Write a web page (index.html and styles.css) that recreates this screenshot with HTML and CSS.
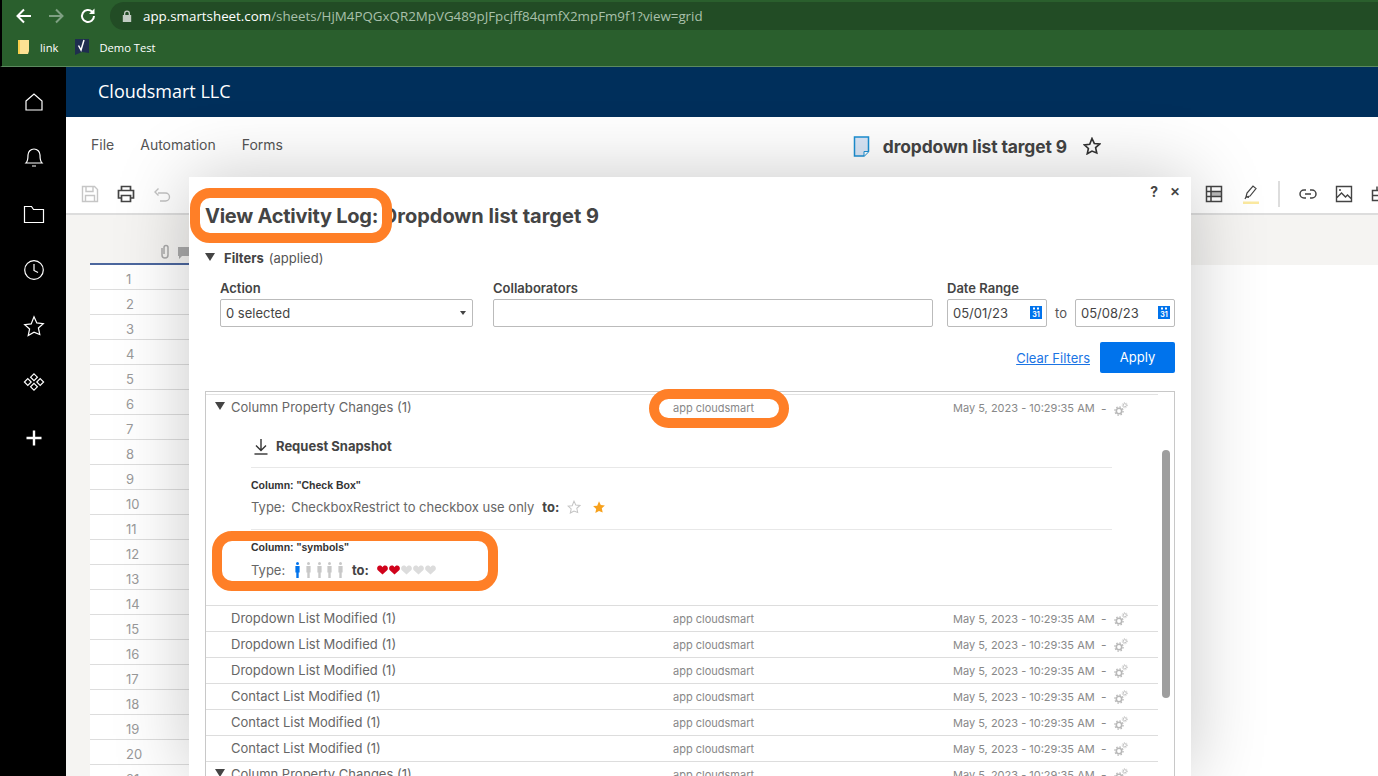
FILE: index.html
```html
<!DOCTYPE html>
<html lang="en">
<head>
<meta charset="utf-8">
<title>Smartsheet activity log</title>
<link rel="stylesheet" href="styles.css">
</head>
<body>
<svg class="defs" width="0" height="0" aria-hidden="true">
  <symbol id="gears" viewBox="0 0 14 14">
    <circle cx="5" cy="9" r="2.700" fill="none" stroke="#b8b8b8" stroke-width="1.600"/>
    <circle cx="5" cy="9" r="4.100" fill="none" stroke="#b8b8b8" stroke-width="1.300" stroke-dasharray="1.500 1.700"/>
    <circle cx="10.800" cy="3.200" r="1.600" fill="none" stroke="#c4c4c4" stroke-width="1"/>
    <circle cx="10.800" cy="3.200" r="2.600" fill="none" stroke="#c4c4c4" stroke-width="1" stroke-dasharray="1 1.200"/>
  </symbol>
  <symbol id="heart" viewBox="0 0 12 10">
    <path d="M6 10 .9 5.200C-.6 3.600.2.400 3 .2 4.400.1 5.400.9 6 1.900 6.600.9 7.600.1 9 .2c2.800.2 3.600 3.400 2.100 5Z"/>
  </symbol>
  <symbol id="person" viewBox="0 0 5 16">
    <circle cx="2.500" cy="1.600" r="1.500"/>
    <path d="M.4 4h4.200v6.500H3.700V16H1.300v-5.500H.4Z"/>
  </symbol>
  <symbol id="cal" viewBox="0 0 12 13">
    <rect width="12" height="13" fill="#0073ec"/>
    <rect x="3" y="1.500" width="2" height="2" fill="#fff"/><rect x="7" y="1.500" width="2" height="2" fill="#fff"/>
  </symbol>
</svg>

<header class="chrome">
  <div class="chrome-top">
    <svg class="nav" width="18" height="18" viewBox="0 0 18 18"><path d="M16 9H3M9 2.500 2.500 9 9 15.500" fill="none" stroke="#fff" stroke-width="2"/></svg>
    <svg class="nav" width="18" height="18" viewBox="0 0 18 18"><path d="M2 9h13M9 2.500 15.500 9 9 15.500" fill="none" stroke="#7fa083" stroke-width="2"/></svg>
    <svg class="nav" width="18" height="18" viewBox="0 0 18 18"><path d="M15 9a6 6 0 1 1-1.800-4.300" fill="none" stroke="#fff" stroke-width="2"/><path d="M15.500 1.500v5.500H10Z" fill="#fff"/></svg>
    <div class="omnibox">
      <svg width="10" height="12" viewBox="0 0 10 12"><path d="M2 5V3.500a3 3 0 0 1 6 0V5h1.200v7H.8V5Zm1.300 0h3.400V3.500a1.700 1.700 0 0 0-3.400 0Z" fill="#c2ccc3"/></svg>
      <span class="url"><b>app.smartsheet.com</b>/sheets/HjM4PQGxQR2MpVG489pJFpcjff84qmfX2mpFm9f1?view=grid</span>
    </div>
  </div>
  <div class="bookmarks">
    <span class="bookmark"><svg width="12" height="14" viewBox="0 0 12 14"><path d="M0 0h11v11l-1 3H0Z" fill="#fde293"/><path d="M0 0h2v14H0Z" fill="#f9cf4b"/></svg>link</span>
    <span class="bookmark"><svg width="14" height="16" viewBox="0 0 14 16"><path d="M0 0h14v14l-7-1-7 3Z" fill="#1f2e4f"/><path d="M3.500 6.500 6 11l3-10" fill="none" stroke="#fff" stroke-width="1.500"/></svg>Demo Test</span>
  </div>
</header>

<div class="app">
  <nav class="rail">
    <svg width="22" height="22" viewBox="0 0 22 22"><path d="M3 10 11 3l8 7v9H3Z" fill="none" stroke="#fff" stroke-width="1.200"/></svg>
    <svg width="22" height="22" viewBox="0 0 22 22"><path d="M3 16c2-2 2-4 2-8a6 6 0 0 1 12 0c0 4 0 6 2 8ZM9 19h4" fill="none" stroke="#fff" stroke-width="1.200"/></svg>
    <svg width="22" height="22" viewBox="0 0 22 22"><path d="M1.500 3.500h7l2 3h10v13h-19Z" fill="none" stroke="#fff" stroke-width="1.200"/></svg>
    <svg width="22" height="22" viewBox="0 0 22 22"><circle cx="11" cy="11" r="9.300" fill="none" stroke="#fff" stroke-width="1.200"/><path d="M11 5v6.500l4 2" fill="none" stroke="#fff" stroke-width="1.200"/></svg>
    <svg width="22" height="22" viewBox="0 0 22 22"><path d="m11 1.800 2.800 6.100 6.500.7-4.900 4.400 1.400 6.500L11 17.200l-5.800 3.300 1.400-6.500-4.900-4.400 6.500-.7Z" fill="none" stroke="#fff" stroke-width="1.200"/></svg>
    <svg width="22" height="22" viewBox="0 0 22 22"><g fill="none" stroke="#fff" stroke-width="1.200"><path d="m11 2.800 3.400 3.400-3.400 3.400-3.400-3.400Z"/><path d="m4.800 7.600 3.400 3.400-3.400 3.400L1.400 11Z"/><path d="m17.200 7.600 3.400 3.400-3.400 3.400-3.400-3.400Z"/><path d="m11 12.400 3.400 3.400-3.400 3.400-3.400-3.400Z"/></g></svg>
    <svg width="22" height="22" viewBox="0 0 22 22"><path d="M11 3.500v15M3.500 11h15" fill="none" stroke="#fff" stroke-width="2.400"/></svg>
  </nav>

  <main class="sheet">
    <div class="brand"><span>Cloudsmart LLC</span></div>
    <div class="menu">
      <span>File</span><span>Automation</span><span>Forms</span>
      <div class="doc">
        <svg width="17" height="21" viewBox="0 0 17 21"><path d="M1.500 1h14v14.500L11 20H1.500Z" fill="#d8e5f6" stroke="#1b8fd2" stroke-width="1.500"/><path d="M11 20v-4.500h4.500" fill="#fff" stroke="#1b8fd2"/></svg>
        <strong>dropdown list target 9</strong>
        <svg class="doc-star" width="18" height="18" viewBox="0 0 22 22"><path d="m11 1.800 2.800 6.100 6.500.7-4.900 4.400 1.400 6.500L11 17.200l-5.800 3.300 1.400-6.500-4.900-4.400 6.500-.7Z" fill="none" stroke="#333" stroke-width="2"/></svg>
      </div>
    </div>
    <div class="toolbar">
      <svg width="18" height="18" viewBox="0 0 18 18"><path d="M1.500 1.500h12l3 3v12h-15ZM5 1.500v5h7v-5M4.500 16.500v-6h9v6" fill="none" stroke="#c6c6c6" stroke-width="1.400"/></svg>
      <svg width="18" height="18" viewBox="0 0 18 18"><path d="M4.500 5V1.500h9V5M4.500 13H1.500V5.500h15V13h-3M4.500 10.500h9v6h-9Z" fill="none" stroke="#444" stroke-width="1.700"/></svg>
      <svg width="18" height="18" viewBox="0 0 18 18"><path d="M5 8h7.500a4 4 0 0 1 0 8H7M5.500 3.500 2 7l3.500 3.500" fill="none" stroke="#c2c2c2" stroke-width="1.400"/></svg>
      <div class="tool-right">
        <svg width="18" height="18" viewBox="0 0 18 18"><path d="M6 6.500h10.500v5H6Z" fill="#bbb"/><path d="M1.500 1.500h15v15h-15ZM1.500 6.500h15M1.500 11.500h15M6 1.500v15" fill="none" stroke="#444" stroke-width="1.500"/></svg>
        <svg class="marker" width="18" height="20" viewBox="0 0 18 20"><path d="m4 13 1-4 6-7 3 2.500-6 7.500ZM3 15l1-2 3 .5" fill="none" stroke="#444" stroke-width="1.200"/><path d="M1 17.500h16V20H1Z" fill="#fbe9a0"/></svg>
        <i class="tool-sep"></i>
        <svg width="18" height="18" viewBox="0 0 18 18"><path d="M7 5H5a4 4 0 0 0 0 8h2M11 5h2a4 4 0 0 1 0 8h-2M6 9h6" fill="none" stroke="#444" stroke-width="1.500"/></svg>
        <svg width="18" height="18" viewBox="0 0 18 18"><path d="M1.500 1.500h15v15h-15ZM1.500 13l5-5 4 4 2-2 4 4" fill="none" stroke="#444" stroke-width="1.400"/><circle cx="5" cy="5" r="1" fill="#444"/></svg>
        <svg width="18" height="18" viewBox="0 0 18 18"><path d="M1.500 5.500h15v10h-15ZM1.500 10.500h15M6 1.500v4" fill="none" stroke="#444" stroke-width="1.500"/></svg>
      </div>
    </div>
    <div class="grid-head">
      <svg width="12" height="15" viewBox="0 0 12 15"><path d="M3 4v7a3 3 0 0 0 6 0V3.500a2 2 0 0 0-4 0V10" fill="none" stroke="#aaa" stroke-width="1.500"/></svg>
      <svg width="12" height="12" viewBox="0 0 12 12"><path d="M0 0h12v9H4l-3 3V9H0Z" fill="#aaa"/></svg>
    </div>
    <div class="grid-body">
      <div class="gutter"></div>
      <ol class="rows">
        <li>1</li><li>2</li><li>3</li><li>4</li><li>5</li><li>6</li><li>7</li><li>8</li><li>9</li><li>10</li><li>11</li><li>12</li><li>13</li><li>14</li><li>15</li><li>16</li><li>17</li><li>18</li><li>19</li><li>20</li><li>21</li>
      </ol>
    </div>
  </main>
</div>

<section class="modal">
  <div class="modal-tools"><span>?</span><span class="close">✕</span></div>
  <h1 class="modal-title"><span class="title-lead">View Activity Log:</span> Dropdown list target 9</h1>
  <div class="filters-head"><i class="tri"></i><b>Filters</b><span>(applied)</span></div>
  <div class="filter-fields">
    <label class="field field-action">Action
      <span class="input"><span>0 selected</span><i class="tri-small"></i></span>
    </label>
    <label class="field field-collab">Collaborators
      <span class="input"></span>
    </label>
    <div class="field">Date Range
      <div class="dates">
        <span class="input date"><span>05/01/23</span><span class="cal"><svg width="12" height="13"><use href="#cal"/></svg><em>31</em></span></span>
        <span class="to">to</span>
        <span class="input date"><span>05/08/23</span><span class="cal"><svg width="12" height="13"><use href="#cal"/></svg><em>31</em></span></span>
      </div>
    </div>
  </div>
  <div class="filter-actions"><a class="clear">Clear Filters</a><button class="apply">Apply</button></div>

  <div class="log">
    <div class="log-list">
      <div class="log-row log-row-first"><i class="tri"></i><span class="act">Column Property Changes (1)</span><span class="who">app cloudsmart</span><span class="when">May 5, 2023 - 10:29:35 AM</span><span class="dash">-</span><svg class="gear" width="14" height="14"><use href="#gears"/></svg></div>
      <div class="detail">
        <div class="snapshot"><svg width="16" height="17" viewBox="0 0 16 17"><path d="M8 1v11M3 7.500 8 12.500 13 7.500" fill="none" stroke="#333" stroke-width="1.400"/><path d="M1.500 16h13" stroke="#333" stroke-width="1.400"/></svg><b>Request Snapshot</b></div>
        <div class="change change-checkbox">
          <b class="col">Column: "Check Box"</b>
          <p class="type"><span>Type:</span><span>CheckboxRestrict to checkbox use only</span><b>to:</b>
            <svg class="star" width="14" height="14" viewBox="0 0 22 22"><path d="m11 1.800 2.800 6.100 6.500.7-4.900 4.400 1.400 6.500L11 17.200l-5.800 3.300 1.400-6.500-4.900-4.400 6.500-.7Z" fill="none" stroke="#c4c4c4" stroke-width="1.600"/></svg>
            <svg class="star star-on" width="14" height="14" viewBox="0 0 22 22"><path d="m11 1.800 2.800 6.100 6.500.7-4.900 4.400 1.400 6.500L11 17.200l-5.800 3.300 1.400-6.500-4.900-4.400 6.500-.7Z" fill="#f7a11d"/></svg>
          </p>
        </div>
        <div class="change">
          <b class="col">Column: "symbols"</b>
          <p class="type"><span>Type:</span>
            <span class="people">
              <svg class="on" width="5" height="16"><use href="#person"/></svg><svg width="5" height="16"><use href="#person"/></svg><svg width="5" height="16"><use href="#person"/></svg><svg width="5" height="16"><use href="#person"/></svg><svg width="5" height="16"><use href="#person"/></svg>
            </span>
            <b>to:</b>
            <span class="hearts">
              <svg class="on" width="11" height="10"><use href="#heart"/></svg><svg class="on" width="11" height="10"><use href="#heart"/></svg><svg width="11" height="10"><use href="#heart"/></svg><svg width="11" height="10"><use href="#heart"/></svg><svg width="11" height="10"><use href="#heart"/></svg>
            </span>
          </p>
        </div>
      </div>
      <div class="log-row"><span class="act">Dropdown List Modified (1)</span><span class="who">app cloudsmart</span><span class="when">May 5, 2023 - 10:29:35 AM</span><span class="dash">-</span><svg class="gear" width="14" height="14"><use href="#gears"/></svg></div>
      <div class="log-row"><span class="act">Dropdown List Modified (1)</span><span class="who">app cloudsmart</span><span class="when">May 5, 2023 - 10:29:35 AM</span><span class="dash">-</span><svg class="gear" width="14" height="14"><use href="#gears"/></svg></div>
      <div class="log-row"><span class="act">Dropdown List Modified (1)</span><span class="who">app cloudsmart</span><span class="when">May 5, 2023 - 10:29:35 AM</span><span class="dash">-</span><svg class="gear" width="14" height="14"><use href="#gears"/></svg></div>
      <div class="log-row"><span class="act">Contact List Modified (1)</span><span class="who">app cloudsmart</span><span class="when">May 5, 2023 - 10:29:35 AM</span><span class="dash">-</span><svg class="gear" width="14" height="14"><use href="#gears"/></svg></div>
      <div class="log-row"><span class="act">Contact List Modified (1)</span><span class="who">app cloudsmart</span><span class="when">May 5, 2023 - 10:29:35 AM</span><span class="dash">-</span><svg class="gear" width="14" height="14"><use href="#gears"/></svg></div>
      <div class="log-row"><span class="act">Contact List Modified (1)</span><span class="who">app cloudsmart</span><span class="when">May 5, 2023 - 10:29:35 AM</span><span class="dash">-</span><svg class="gear" width="14" height="14"><use href="#gears"/></svg></div>
      <div class="log-row"><i class="tri"></i><span class="act">Column Property Changes (1)</span><span class="who">app cloudsmart</span><span class="when">May 5, 2023 - 10:29:35 AM</span><span class="dash">-</span><svg class="gear" width="14" height="14"><use href="#gears"/></svg></div>
    </div>
    <div class="scroll-track"><div class="scroll-thumb"></div></div>
  </div>
</section>

<div class="callout callout-title"></div>
<div class="callout callout-user"></div>
<div class="callout callout-symbols"></div>
</body>
</html>
```

FILE: styles.css
```css
* { box-sizing: border-box; }
html, body { margin: 0; height: 776px; overflow: hidden; }
body { position: relative; width: 1378px; background: #fff; font-family: Inter, "Liberation Sans", sans-serif; color: #444; display: flex; flex-direction: column; }
.defs { position: absolute; }

/* browser chrome */
.chrome { height: 67px; flex: none; background: #2a5f2d; border-left: 2px solid #000; border-bottom: 1px solid #5c8a5f; color: #fff; }
.chrome-top { height: 32px; display: flex; align-items: center; padding-left: 13px; gap: 14px; }
.nav { flex: none; }
.omnibox { height: 28px; margin-left: -1px; flex: 1; background: #224c25; border-radius: 14px 0 0 14px; display: flex; align-items: center; padding-left: 12px; gap: 11px; }
.url { font: 13.350px "Open Sans", sans-serif; color: #a9c0ab; }
.url b { font-weight: 400; color: #fff; }
.bookmarks { height: 34px; display: flex; align-items: center; padding: 0 0 4px 16px; gap: 17px; }
.bookmark { font: 11.200px "Open Sans", sans-serif; display: flex; align-items: center; gap: 10px; color: #fff; }

/* app frame */
.app { flex: 1; display: flex; min-height: 0; }
.rail { width: 66px; flex: none; background: #000; display: flex; flex-direction: column; align-items: center; padding: 24px 0 0 2px; gap: 34px; }
.sheet { flex: 1; min-width: 0; display: flex; flex-direction: column; background: #fff; }
.brand { height: 50px; flex: none; background: #002f5b; display: flex; align-items: center; padding: 0 0 2px 32px; }
.brand span { font: 500 18px "Open Sans", sans-serif; color: #fff; }
.menu { height: 58px; flex: none; background: #fff; display: flex; align-items: center; padding: 0 277px 4px 25px; gap: 26px; font-size: 14px; color: #555; }
.doc { margin: 4px 0 0 auto; display: flex; align-items: center; gap: 13px; }
.doc strong { font: 700 17.400px Inter, sans-serif; color: #444; letter-spacing: -.1px; }
.doc-star { margin-left: 3px; }
.toolbar { height: 40px; flex: none; background: #fff; border-bottom: 2px solid #ddd; display: flex; align-items: center; padding-left: 15px; gap: 18px; }
.tool-right { margin-left: auto; display: flex; align-items: center; gap: 18px; margin-right: -11px; }
.marker { margin-left: 1px; }
.tool-sep { width: 2px; height: 26px; background: #ddd; margin: 0 1px 0 0; }
.grid-head { height: 50px; flex: none; background: #f5f4f2; display: flex; align-items: flex-end; gap: 7px; padding: 0 0 6px 93px; }
.grid-body { flex: 1; min-height: 0; display: flex; }
.gutter { width: 24px; flex: none; background: #f5f4f2; }
.rows { margin: -2px 0 0; padding: 0; list-style: none; flex: none; width: 110px; border-top: 2px solid #4c679e; background: #fff; overflow: hidden; }
.rows li { height: 25px; border-bottom: 1px solid #ddd; font-size: 13px; color: #999; display: flex; align-items: center; padding: 4px 0 0 36px; }

/* modal */
.modal { position: absolute; left: 189px; top: 177px; width: 1002px; height: 599px; background: #fff; box-shadow: 0 0 70px rgba(0,0,0,.22); padding: 0 16px; display: flex; flex-direction: column; }
.modal-tools { height: 24px; display: flex; justify-content: flex-end; gap: 12px; align-items: center; font-size: 14px; font-weight: 700; color: #444; padding-top: 5px; margin-right: -5px; }
.close { font-size: 12px; }
.modal-title { margin: 2px 0 0; font: 700 20px/26px Inter, sans-serif; color: #444; }
.title-lead { letter-spacing: -.25px; }
.filters-head { margin-top: 19px; height: 20px; display: flex; align-items: center; font-size: 13px; color: #555; }
.filters-head b { margin: 0 5px 0 9px; color: #444; }
.tri { width: 0; height: 0; border-left: 5px solid transparent; border-right: 5px solid transparent; border-top: 8px solid #444; flex: none; margin-top: -3px; }
.filter-fields { margin-top: 12px; padding-left: 15px; display: flex; gap: 20px; font-size: 13px; font-weight: 600; color: #444; }
.field { display: flex; flex-direction: column; gap: 3px; width: 228px; line-height: 16px; }
.field-action { width: 253px; }
.field-collab { width: 440px; margin-right: -6px; }
.input { height: 28px; border: 1px solid #bbb; border-radius: 2px; display: flex; align-items: center; padding: 0 5px; font-size: 13px; font-weight: 400; color: #444; justify-content: space-between; background: #fff; }
.tri-small { border-left: 3px solid transparent; border-right: 3px solid transparent; border-top: 4px solid #444; margin-right: 1px; }
.dates { display: flex; align-items: center; gap: 8px; }
.date { width: 100px; padding-right: 4px; }
.to { width: 12px; color: #555; font-weight: 400; text-align: center; }
.cal { position: relative; width: 12px; height: 13px; display: block; margin-top: -2px; }
.cal svg { display: block; }
.cal em { position: absolute; left: 0; right: 0; bottom: 0; text-align: center; font: 700 7px/8px Inter, sans-serif; color: #fff; }
.filter-actions { margin-top: 15px; height: 31px; display: flex; justify-content: flex-end; align-items: center; gap: 10px; }
.clear { font-size: 13px; color: #1b74e4; text-decoration: underline; }
.apply { width: 75px; height: 31px; border: 0; border-radius: 2px; background: #0073ec; color: #fff; font: 400 13px Inter, sans-serif; padding: 0 0 2px; }

/* activity log */
.log { margin-top: 18px; flex: 1; min-height: 0; border: 1px solid #c8c8c8; border-bottom: 0; padding-top: 2px; display: flex; }
.log-list { width: 952px; flex: none; border-top: 1px solid #e2e2e2; }
.log-row { height: 26px; display: flex; align-items: center; border-bottom: 1px solid #ddd; padding: 0 0 2px 25px; position: relative; }
.log-row .tri { position: absolute; left: 9px; top: 7px; margin: 0; }
.log-row-first { border-bottom: 0; height: 24px; padding-bottom: 0; }
.act { width: 442px; font-size: 13px; color: #666; }
.who { width: 280px; font-size: 11px; color: #888; margin-top: 2px; }
.when { width: 148px; font-size: 11px; color: #888; margin-top: 2px; }
.dash { width: 13px; font-size: 12px; color: #888; margin-top: 2px; }
.gear { flex: none; margin-top: 3px; }
.detail { height: 187px; border-bottom: 1px solid #ddd; padding-left: 45px; }
.snapshot { height: 49px; width: 861px; display: flex; align-items: center; gap: 7px; border-bottom: 1px solid #e8e8e8; padding: 6px 0 0 2px; font-size: 13px; color: #444; }
.change { width: 861px; height: 62px; border-bottom: 1px solid #e8e8e8; padding-top: 10px; }
.change:last-child { border-bottom: 0; }
.col { display: block; font: 700 10.500px/14px "Liberation Sans", sans-serif; color: #333; }
.type { margin: 7px 0 0; display: flex; align-items: center; gap: 6px; font-size: 13px; color: #666; line-height: 18px; }
.change-checkbox .type { margin-top: 6px; }
.type b { margin-left: 3px; color: #444; }
.change-checkbox .type b { margin-left: 2px; }
.star { margin-left: 2px; }
.star-on { margin-left: 5px; }
.people { display: flex; gap: 5.700px; margin-left: 4px; }
.people svg { fill: #c8c8c8; }
.people svg.on { fill: #0073ec; }
.hearts { display: flex; gap: 1px; margin-left: 2px; }
.hearts svg { fill: #dcdcdc; }
.hearts svg.on { fill: #d0021b; }
.scroll-track { flex: 1; position: relative; }
.scroll-thumb { position: absolute; left: 4px; top: 56px; width: 8px; height: 248px; border-radius: 4px; background: #9e9e9e; }

/* annotation callouts */
.callout { position: absolute; border: 10px solid #ff7f27; border-radius: 20px; }
.callout-title { left: 190px; top: 188px; width: 202px; height: 55px; }
.callout-user { left: 649px; top: 389px; width: 140px; height: 39px; }
.callout-symbols { left: 212px; top: 531px; width: 286px; height: 60px; }
```
